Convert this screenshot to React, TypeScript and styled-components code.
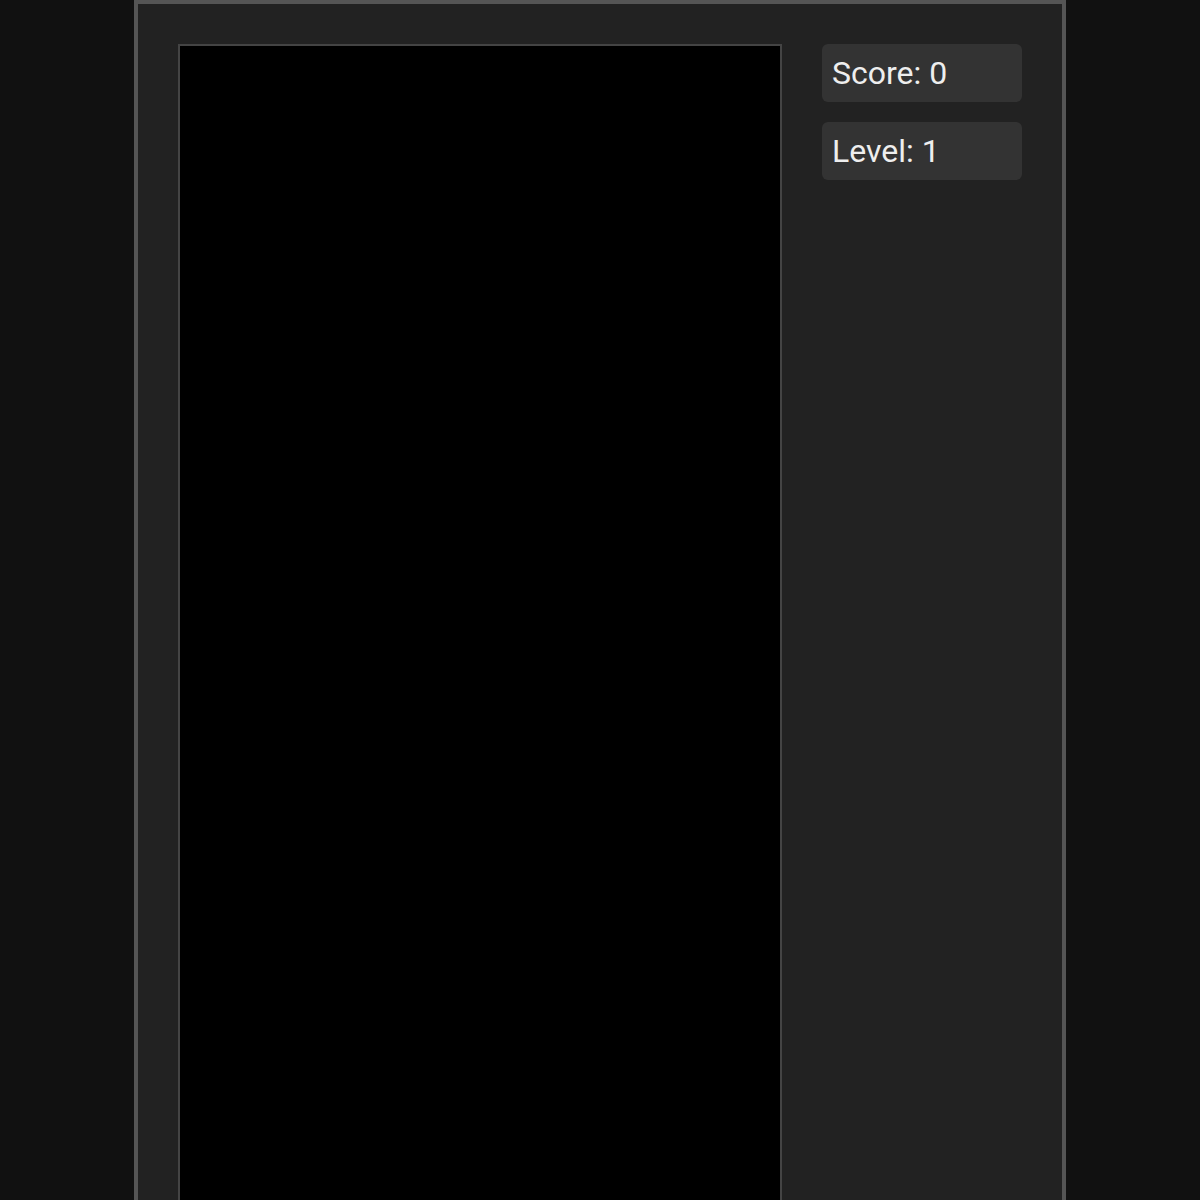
import styled, { createGlobalStyle } from "styled-components";

const GlobalStyle = createGlobalStyle`
  html, body {
    margin: 0;
    padding: 0;
    background: #111;
    color: #eee;
    font-family: Roboto, "Liberation Sans", sans-serif;
  }
`;

const Page = styled.div`
  display: flex;
  justify-content: center;
`;

const Frame = styled.div`
  display: flex;
  gap: 40px;
  padding: 40px;
  background: #222;
  border: 4px solid #555;
`;

const Board = styled.div`
  width: 600px;
  height: 1200px;
  background: #000;
  border: 2px solid #444;
`;

const Side = styled.div`
  display: flex;
  flex-direction: column;
  gap: 20px;
  width: 200px;
`;

const Stat = styled.div`
  background: #333;
  border-radius: 6px;
  padding: 10px;
  font-size: 32px;
  color: #eee;
`;

const App = () => {
  const score = 0;
  const level = 1;
  return (
    <>
      <GlobalStyle />
      <Page>
        <Frame>
          <Board />
          <Side>
            <Stat>Score: {score}</Stat>
            <Stat>Level: {level}</Stat>
          </Side>
        </Frame>
      </Page>
    </>
  );
};

export default App;
